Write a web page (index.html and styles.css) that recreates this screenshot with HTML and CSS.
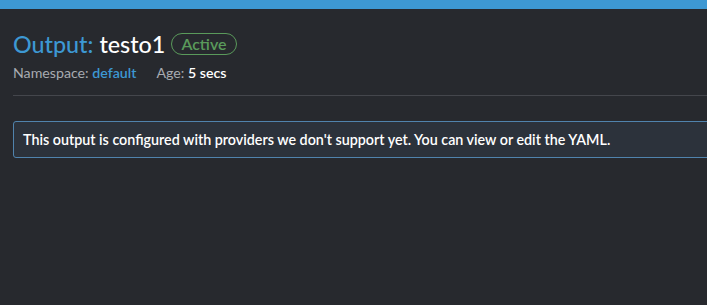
FILE: index.html
```html
<!DOCTYPE html>
<html lang="en">
<head>
<meta charset="UTF-8">
<meta name="viewport" content="width=device-width, initial-scale=1.0">
<title>Output: testo1</title>
<link rel="stylesheet" href="styles.css">
</head>
<body>
    <!-- Barre du haut -->
    <div class="top-bar"></div>

    <div class="content">
        <div class="masthead">
            <h1 class="title">
                <span class="type">Output:</span>
                <span class="name">testo1</span>
                <span class="badge">Active</span>
            </h1>
            <div class="meta">
                <span class="meta-item">Namespace: <a href="#" class="link">default</a></span>
                <span class="meta-item">Age: <span class="value">5 secs</span></span>
            </div>
        </div>

        <div class="banner">
            This output is configured with providers we don't support yet. You can view or edit the YAML.
        </div>
    </div>
</body>
</html>
```

FILE: styles.css
```css
/* Styles généraux */
body {
    margin: 0;
    padding: 0;
    background-color: #27292e;
    color: #fff;
    font-family: Lato, "Open Sans", sans-serif;
    overflow: hidden;
}

.top-bar {
    height: 9px;
    background-color: #3d98d3;
}

.content {
    padding: 0 0 0 13px;
    margin-right: -40px;
}

/* En-tête */
.masthead {
    padding: 22px 0 14px;
    border-bottom: 1px solid #44464c;
}
.title {
    margin: 0;
    display: flex;
    align-items: center;
    gap: 6px;
    font-size: 23.3px;
    font-weight: 500;
    line-height: 26px;
}
.title .type {
    color: #3d98d3;
}
.title .badge {
    margin-left: 0;
    padding: 0 9px;
    border: 1px solid #5a9a5b;
    border-radius: 12px;
    color: #5a9a5b;
    font-size: 16px;
    font-weight: 600;
    line-height: 20px;
}

.meta {
    margin-top: 7px;
    display: flex;
    gap: 20px;
    font-size: 14.2px;
    color: #a8abb1;
}
.meta .link {
    color: #3d98d3;
    font-weight: 600;
    text-decoration: none;
}
.meta .value {
    color: #fff;
    font-weight: 600;
}

/* Bannière */
.banner {
    margin-top: 25px;
    padding: 9px 9px;
    border: 1px solid #5083ad;
    border-radius: 3px;
    background-color: #2c323b;
    font-size: 14.3px;
    font-weight: 600;
    line-height: 17px;
}
```
